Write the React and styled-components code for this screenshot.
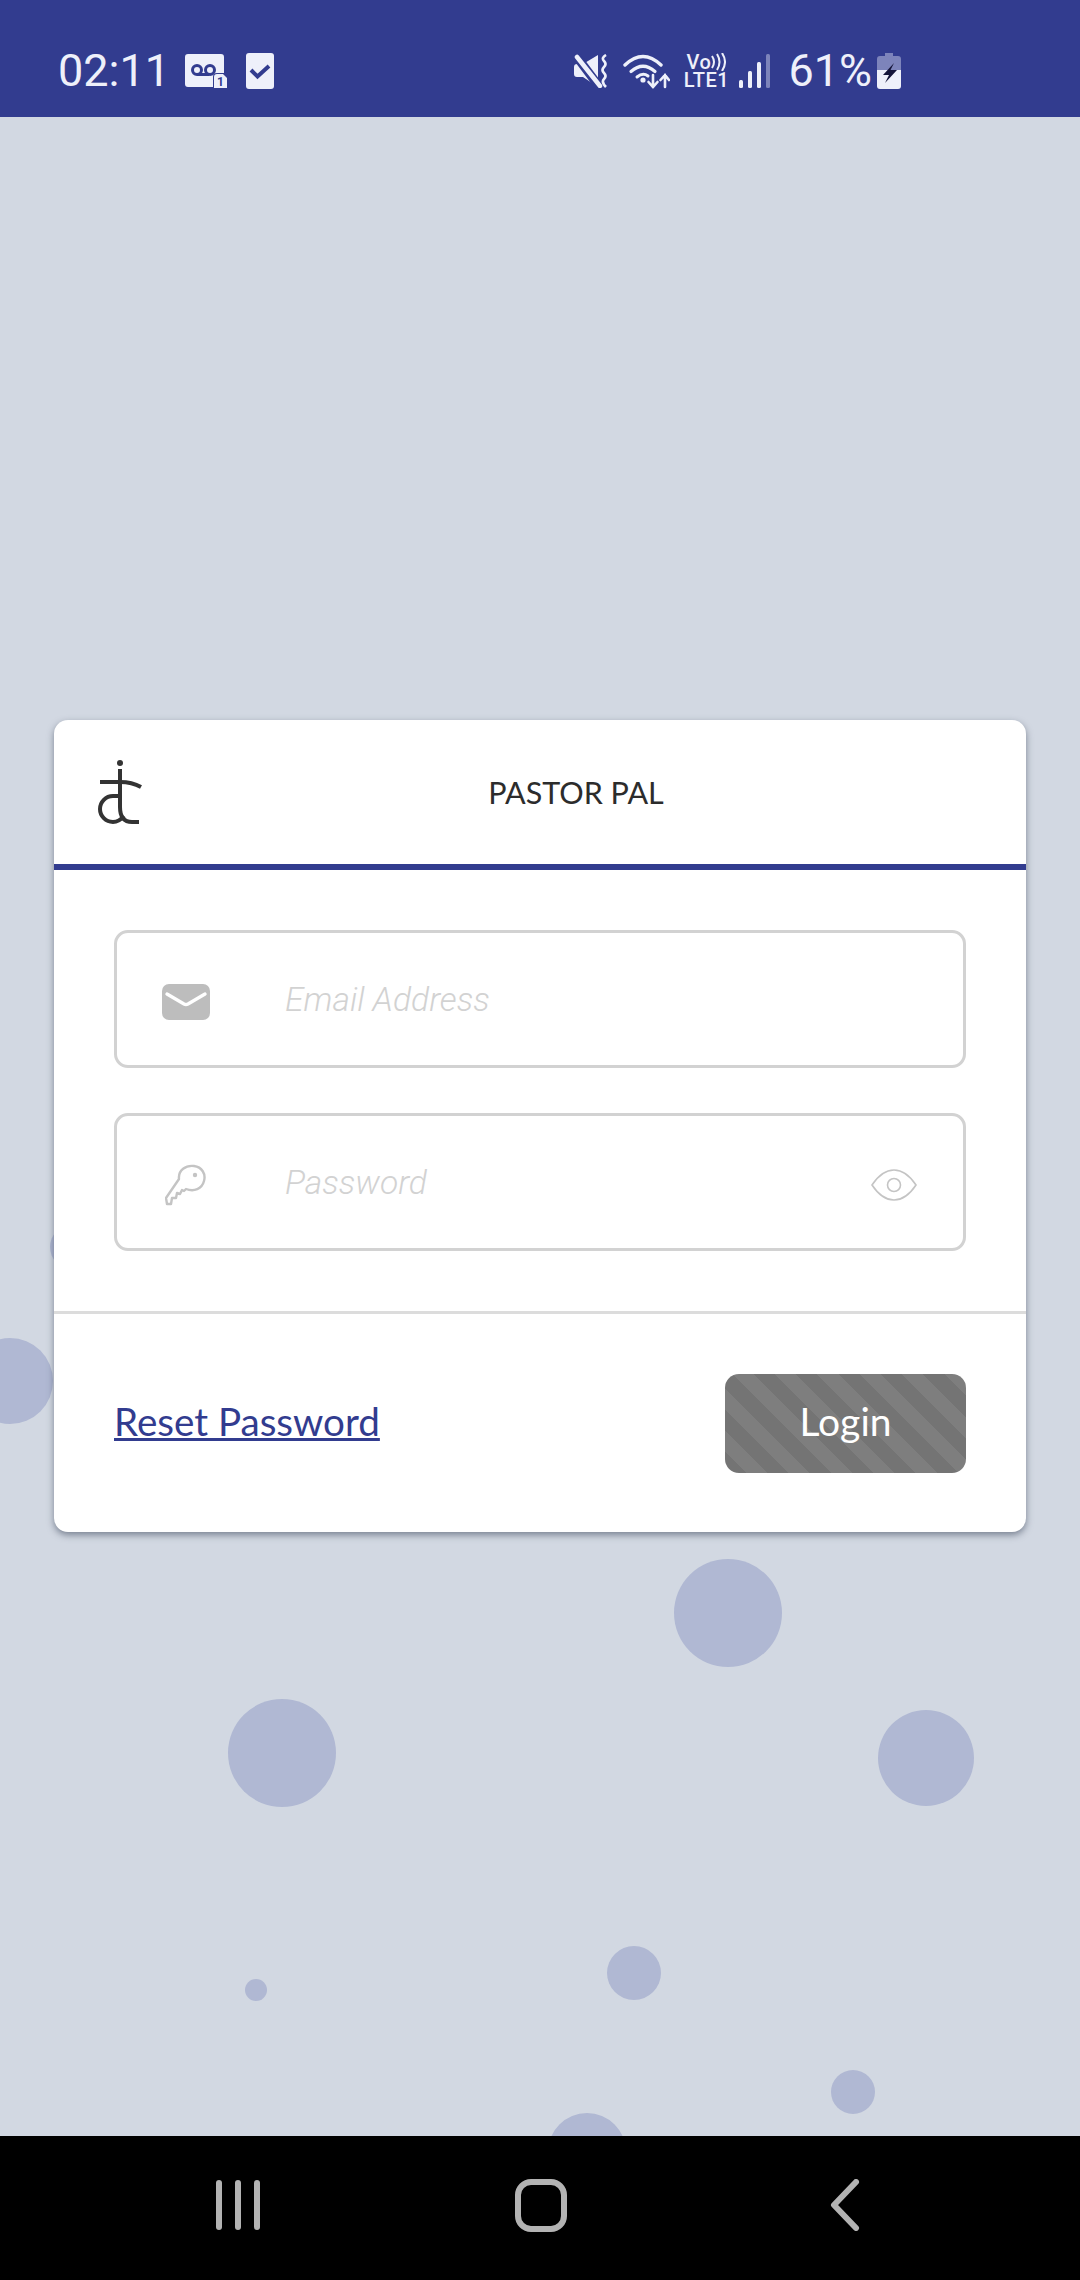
import React from 'react';
import styled, { createGlobalStyle } from 'styled-components';

const bubbles = [
  { x: 10, y: 1380, r: 43 },
  { x: 72, y: 1246, r: 22 },
  { x: 728, y: 1612, r: 54 },
  { x: 282, y: 1752, r: 54 },
  { x: 926, y: 1757, r: 48 },
  { x: 256, y: 1989, r: 11 },
  { x: 634, y: 1972, r: 27 },
  { x: 853, y: 2091, r: 22 },
  { x: 587, y: 2151, r: 39 },
];

const VoicemailIcon = () => (
  <StatusSvg width="42" height="34" viewBox="0 0 42 34" $ml={15}>
    <path d="M3 0H36a3 3 0 0 1 3 3V19H32a4 4 0 0 0-4 4V33H3a3 3 0 0 1-3-3V3a3 3 0 0 1 3-3Z" fill="#eef0fa" />
    <path d="M12 20.5h12" stroke="#323c8f" strokeWidth="3" fill="none" />
    <circle cx="12" cy="16" r="4.5" stroke="#323c8f" strokeWidth="3" fill="none" />
    <circle cx="25" cy="16" r="4.5" stroke="#323c8f" strokeWidth="3" fill="none" />
    <path d="M32 20H38l4 4V34H29V23a3 3 0 0 1 3-3Z" fill="#eef0fa" />
    <text x="35.5" y="32" fontFamily="Roboto" fontWeight="700" fontSize="12" textAnchor="middle" fill="#323c8f">1</text>
  </StatusSvg>
);

const CheckIcon = () => (
  <StatusSvg width="28" height="36" viewBox="0 0 28 36" $ml={19}>
    <rect width="28" height="36" rx="3" fill="#eef0fa" />
    <path d="M5 17l6.5 6.5L23 13" stroke="#323c8f" strokeWidth="4" fill="none" />
  </StatusSvg>
);

const MuteIcon = () => (
  <StatusSvg width="34" height="34" viewBox="0 0 34 34">
    <path d="M3 10H9L24 1V33L9 23H3a3 3 0 0 1-3-3V13a3 3 0 0 1 3-3Z" fill="#eef0fa" />
    <path d="M0 -1L27 35" stroke="#323c8f" strokeWidth="9" fill="none" />
    <path d="M3 3L26 32" stroke="#eef0fa" strokeWidth="4.5" strokeLinecap="round" fill="none" />
    <path d="M32 1Q27 4 30 7Q33 10 30 13Q27 16 30 19Q33 22 30 25Q27 28 32 33" stroke="#eef0fa" strokeWidth="2.6" fill="none" />
  </StatusSvg>
);

const WifiIcon = () => (
  <StatusSvg width="47" height="36" viewBox="0 0 47 36" $ml={15}>
    <g stroke="#eef0fa" fill="none" strokeLinecap="round">
      <path d="M2 12Q20 -5 38 12" strokeWidth="3.4" />
      <path d="M8 18.5Q20 8 32 18.5" strokeWidth="3.2" />
      <path d="M14 24Q20 19 25 23" strokeWidth="3" />
      <path d="M30 22V34M25.5 29L30 34L34.5 29" strokeWidth="2.6" />
      <path d="M42 34V22M37.5 27L42 22L46 27" strokeWidth="2.6" />
    </g>
    <circle cx="20" cy="27" r="2.6" fill="#eef0fa" />
  </StatusSvg>
);

const VolteIcon = () => (
  <VolteBlock>
    <VolteLine>
      Vo
      <svg width="15" height="18" viewBox="0 0 15 18">
        <path d="M1 3Q5 9 1 15M6 1Q11 9 6 17M11 0Q17 9 11 18" stroke="#eef0fa" strokeWidth="2" fill="none" />
      </svg>
    </VolteLine>
    <VolteLine>LTE1</VolteLine>
  </VolteBlock>
);

const SignalIcon = () => (
  <StatusSvg width="32" height="34" viewBox="0 0 32 34" $ml={11}>
    <rect x="0" y="26" width="4" height="8" rx="1.5" fill="#eef0fa" />
    <rect x="9" y="17" width="4" height="17" rx="1.5" fill="#eef0fa" />
    <rect x="18" y="8" width="4" height="26" rx="1.5" fill="#eef0fa" />
    <rect x="27" y="0" width="4" height="34" rx="1.5" fill="#7d84bb" />
  </StatusSvg>
);

const BatteryIcon = () => (
  <StatusSvg width="24" height="36" viewBox="0 0 24 36" $ml={5}>
    <path d="M8 0H16V3H21a3 3 0 0 1 3 3V17H0V6a3 3 0 0 1 3-3H8Z" fill="#7d84bb" />
    <path d="M0 17H24V33a3 3 0 0 1-3 3H3a3 3 0 0 1-3-3Z" fill="#eef0fa" />
    <path d="M17 10L6 22H12L8 30L20 17H13.5L17 10Z" fill="#15153a" />
  </StatusSvg>
);

const Logo = () => (
  <svg width="50" height="70" viewBox="0 0 50 70">
    <circle cx="26" cy="6" r="3" fill="#333" />
    <g stroke="#333" strokeWidth="4" fill="none">
      <path d="M6 25H26Q38 25 47 30" />
      <path d="M26 12V50Q26 65 38 65H45" />
      <path d="M26 39H19A13 13 0 0 0 19 65Q25 65 30 59" />
    </g>
  </svg>
);

const MailIcon = () => (
  <svg width="48" height="36" viewBox="0 0 48 36">
    <rect width="48" height="36" rx="7" fill="#bdbdbd" />
    <path d="M5 10L22 20Q24 21 26 20L43 10" stroke="#fff" strokeWidth="3.4" strokeLinecap="round" fill="none" />
  </svg>
);

const KeyIcon = () => (
  <svg width="42" height="42" viewBox="0 0 42 42">
    <path
      d="M14 15C13 6 21 1 29 2C37 3 41 10 39 17C37 25 29 28 21 25L19 27L17 26L15 30L12 29L11 34L7 34L6 40L2 40L1 34Z"
      stroke="#c4c4c4"
      strokeWidth="2.4"
      strokeLinejoin="round"
      fill="none"
    />
    <circle cx="30" cy="11" r="2.2" fill="#c4c4c4" />
  </svg>
);

const EyeIcon = () => (
  <svg width="46" height="34" viewBox="0 0 46 34">
    <path d="M1 17Q11 2 23 2Q35 2 45 17Q35 32 23 32Q11 32 1 17Z" stroke="#c4c4c4" strokeWidth="1.6" fill="none" />
    <circle cx="23" cy="17" r="6.5" stroke="#c4c4c4" strokeWidth="1.6" fill="none" />
  </svg>
);

const App = () => {
  return (
    <Screen>
      <GlobalStyle />
      <StatusBar>
        <StatusGroup>
          <Clock>02:11</Clock>
          <VoicemailIcon />
          <CheckIcon />
        </StatusGroup>
        <StatusGroup>
          <MuteIcon />
          <WifiIcon />
          <VolteIcon />
          <SignalIcon />
          <Percent>61%</Percent>
          <BatteryIcon />
        </StatusGroup>
      </StatusBar>

      <Main>
        {bubbles.map((b, i) => (
          <Bubble key={i} $x={b.x} $y={b.y} $r={b.r} />
        ))}
        <Card>
          <CardHeader>
            <Logo />
            <Title>PASTOR PAL</Title>
          </CardHeader>
          <Fields>
            <Field>
              <FieldIcon>
                <MailIcon />
              </FieldIcon>
              <FieldInput type="email" placeholder="Email Address" />
            </Field>
            <Field>
              <FieldIcon>
                <KeyIcon />
              </FieldIcon>
              <FieldInput type="password" placeholder="Password" />
              <EyeButton>
                <EyeIcon />
              </EyeButton>
            </Field>
          </Fields>
          <CardFooter>
            <ResetLink href="#">Reset Password</ResetLink>
            <LoginButton>Login</LoginButton>
          </CardFooter>
        </Card>
      </Main>

      <NavBar>
        <MenuBars>
          <MenuBar />
          <MenuBar />
          <MenuBar />
        </MenuBars>
        <HomeKey />
        <svg width="30" height="52" viewBox="0 0 30 52">
          <path d="M26 3L4 26L26 49" stroke="#b3b3b3" strokeWidth="6" strokeLinecap="round" strokeLinejoin="round" fill="none" />
        </svg>
      </NavBar>
    </Screen>
  );
};

export default App;

const GlobalStyle = createGlobalStyle`
  html, body {
    margin: 0;
    padding: 0;
  }
  * {
    box-sizing: border-box;
  }
`;

const Screen = styled.div`
  display: flex;
  flex-direction: column;
  width: 1080px;
  height: 2280px;
  overflow: hidden;
  background-color: #d2d8e2;
`;

const StatusBar = styled.div`
  flex: none;
  display: flex;
  align-items: center;
  justify-content: space-between;
  height: 117px;
  padding: 25px 179px 0 58px;
  background-color: #323c8f;
  color: #eef0fa;
  font-family: Roboto, sans-serif;
`;

const StatusGroup = styled.div`
  display: flex;
  align-items: center;
`;

const StatusSvg = styled.svg`
  flex: none;
  margin-left: ${(props) => props.$ml || 0}px;
`;

const VolteBlock = styled.div`
  display: flex;
  flex-direction: column;
  align-items: center;
  width: 44px;
  margin-left: 14px;
  font-weight: 500;
  font-size: 20px;
`;

const VolteLine = styled.div`
  display: flex;
  align-items: center;
  height: 18px;
  line-height: 18px;
  letter-spacing: 0.5px;
  white-space: nowrap;
`;

const Clock = styled.span`
  font-size: 45px;
  line-height: 48px;
`;

const Percent = styled.span`
  margin-left: 17px;
  font-size: 45px;
  line-height: 48px;
`;

const Main = styled.main`
  position: relative;
  flex: 1;
  display: flex;
  align-items: center;
  justify-content: center;
  overflow: hidden;
`;

const Bubble = styled.div`
  position: absolute;
  left: ${(props) => props.$x - props.$r}px;
  top: ${(props) => props.$y - props.$r - 116}px;
  width: ${(props) => props.$r * 2}px;
  height: ${(props) => props.$r * 2}px;
  border-radius: 50%;
  background-color: #b0b8d3;
`;

const Card = styled.div`
  position: relative;
  width: 972px;
  height: 812px;
  margin-bottom: 1px;
  border-radius: 14px;
  background-color: #fff;
  box-shadow: 0 3px 7px rgba(50, 60, 80, 0.55);
`;

const CardHeader = styled.div`
  display: flex;
  align-items: center;
  height: 150px;
  padding: 0 18px 0 40px;
  border-bottom: 6px solid #323c8f;
`;

const Title = styled.div`
  flex: 1;
  text-align: center;
  font-family: Lato, sans-serif;
  font-size: 30.5px;
  color: #2c2c2c;
`;

const Fields = styled.div`
  display: flex;
  flex-direction: column;
  gap: 45px;
  padding: 60px;
  border-bottom: 3px solid #dcdcdc;
`;

const Field = styled.div`
  display: flex;
  align-items: center;
  height: 138px;
  padding: 0 46px 0 45px;
  border: 3px solid #d2d2d2;
  border-radius: 14px;
`;

const FieldIcon = styled.div`
  flex: none;
  display: flex;
  justify-content: center;
  width: 48px;
  margin: 5px 75px 0 0;
`;

const FieldInput = styled.input`
  flex: 1;
  min-width: 0;
  border: none;
  outline: none;
  background: none;
  padding: 0;
  font-family: Roboto, sans-serif;
  font-size: 33.6px;
  font-style: italic;
  font-weight: 300;

  &::placeholder {
    color: #d2d2d2;
    opacity: 1;
  }
`;

const EyeButton = styled.div`
  display: flex;
  margin-top: 6px;
`;

const CardFooter = styled.div`
  display: flex;
  align-items: center;
  justify-content: space-between;
  padding: 60px;
`;

const ResetLink = styled.a`
  margin-top: -5px;
  font-family: Lato, sans-serif;
  font-size: 38.6px;
  color: #323c8f;
  text-decoration: underline;
`;

const LoginButton = styled.button`
  width: 241px;
  height: 99px;
  padding: 0 0 5px;
  border: none;
  border-radius: 14px;
  background: repeating-linear-gradient(45deg, #747474 0 15px, #7e7e7e 15px 30px);
  color: #fff;
  font-family: Lato, sans-serif;
  font-size: 39px;
`;

const NavBar = styled.nav`
  flex: none;
  display: grid;
  grid-template-columns: repeat(3, 304px);
  justify-content: center;
  justify-items: center;
  align-items: center;
  height: 144px;
  padding: 0 0 6px 1px;
  background-color: #000;
`;

const MenuBars = styled.div`
  display: flex;
  gap: 13px;
  margin-left: 3px;
`;

const MenuBar = styled.div`
  width: 6px;
  height: 50px;
  border-radius: 3px;
  background-color: #b3b3b3;
`;

const HomeKey = styled.div`
  width: 52px;
  height: 53px;
  border: 6px solid #b3b3b3;
  border-radius: 16px;
`;
